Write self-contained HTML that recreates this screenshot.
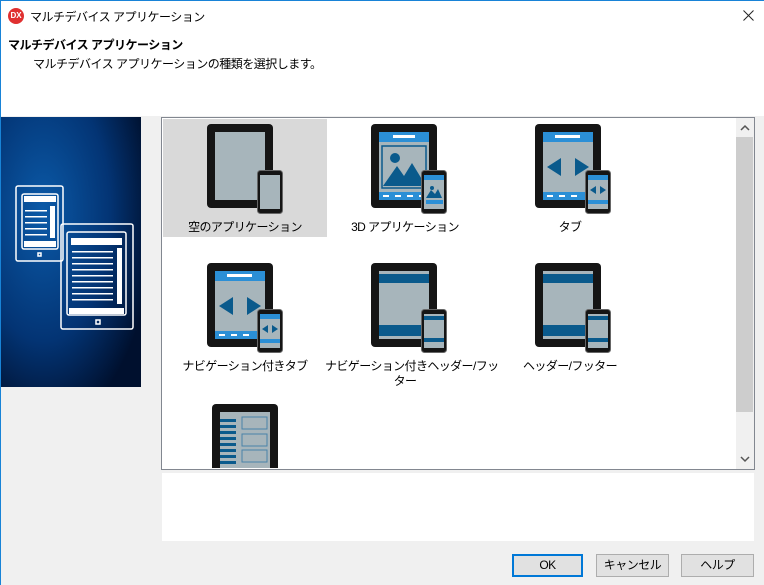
<!DOCTYPE html>
<html><head><meta charset="utf-8"><style>
*{margin:0;padding:0;box-sizing:border-box}
body{width:764px;height:585px;background:#f0f0f0;font-family:"Liberation Sans","Noto Sans CJK JP",sans-serif;font-size:12px;color:#000;position:relative;overflow:hidden}
.abs{position:absolute}
.lbl{position:absolute;text-align:center;font-size:12px;line-height:15px;letter-spacing:-0.6px;white-space:nowrap}
.btn{position:absolute;top:554px;height:23px;background:#e1e1e1;border:1px solid #adadad;text-align:center;line-height:21px;font-size:12px;letter-spacing:-0.5px}
</style></head><body>
<div class="abs" style="left:0;top:0;width:764px;height:116px;background:#fff"></div>
<div class="abs" style="left:0;top:0;width:1px;height:585px;background:#1883d7"></div>
<div class="abs" style="left:0;top:0;width:764px;height:1px;background:#1883d7"></div>
<div class="abs" style="left:8px;top:8px;width:16px;height:16px;border-radius:50%;background:#e03030;color:#fff;font-size:8px;font-weight:bold;line-height:16px;text-align:center">DX</div>
<div class="abs" style="left:30px;top:8px;font-size:12px;letter-spacing:-0.5px">マルチデバイス アプリケーション</div>
<svg class="abs" style="left:743px;top:10px" width="11" height="11"><path d="M0.5 0.5 L10.5 10.5 M10.5 0.5 L0.5 10.5" stroke="#222" stroke-width="1"/></svg>
<div class="abs" style="left:8px;top:36px;font-weight:bold;letter-spacing:-0.5px">マルチデバイス アプリケーション</div>
<div class="abs" style="left:33px;top:55px;letter-spacing:-0.5px">マルチデバイス アプリケーションの種類を選択します。</div>

<svg class="abs" style="left:1px;top:117px" width="140" height="270">
<defs><radialGradient id="g" cx="0.3" cy="0.35" r="0.8"><stop offset="0" stop-color="#0b5aa8"/><stop offset="0.6" stop-color="#033474"/><stop offset="1" stop-color="#00102e"/></radialGradient></defs>
<rect width="140" height="270" fill="url(#g)"/>
<g fill="none" stroke="#fff" stroke-width="1.5">
<rect x="15" y="69" width="47" height="75" rx="2"/><rect x="21" y="77" width="36" height="55" rx="2"/>
<rect x="60" y="107" width="72" height="105" rx="2"/><rect x="66" y="115" width="59" height="83" rx="2"/>
<rect x="37" y="136" width="3" height="3"/><rect x="95" y="203" width="4" height="4"/></g>
<g fill="#fff"><rect x="23" y="79" width="32" height="6"/><rect x="49" y="89" width="5" height="32"/>
<rect x="24" y="93" width="22" height="1.5"/><rect x="24" y="99" width="22" height="1.5"/><rect x="24" y="105" width="22" height="1.5"/><rect x="24" y="111" width="22" height="1.5"/><rect x="24" y="117" width="22" height="1.5"/>
<rect x="70" y="121" width="51" height="7"/><rect x="116" y="131" width="5" height="56"/>
<rect x="71" y="134" width="41" height="1.5"/><rect x="71" y="140" width="41" height="1.5"/><rect x="71" y="146" width="41" height="1.5"/><rect x="71" y="152" width="41" height="1.5"/><rect x="71" y="158" width="41" height="1.5"/><rect x="71" y="164" width="41" height="1.5"/><rect x="71" y="170" width="41" height="1.5"/><rect x="71" y="176" width="41" height="1.5"/><rect x="71" y="182" width="41" height="1.5"/>
<rect x="23" y="124" width="32" height="6"/><rect x="68" y="191" width="55" height="6"/></g>
</svg>

<div class="abs" style="left:161px;top:117px;width:594px;height:353px;background:#fff;border:1px solid #828790"></div>
<div class="abs" style="left:163px;top:119px;width:164px;height:118px;background:#d9d9d9"></div>
<div class="abs" style="left:736px;top:118px;width:18px;height:351px;background:#f0f0f0"></div>
<div class="abs" style="left:736px;top:137px;width:17px;height:275px;background:#cdcdcd"></div>
<svg class="abs" style="left:740px;top:124px" width="10" height="8"><path d="M1 6 L5 2 L9 6" fill="none" stroke="#555" stroke-width="1.5"/></svg>
<svg class="abs" style="left:740px;top:455px" width="10" height="8"><path d="M1 2 L5 6 L9 2" fill="none" stroke="#555" stroke-width="1.5"/></svg>

<svg width="0" height="0" style="position:absolute"><defs>
<symbol id="tab" viewBox="0 0 66 84"><rect width="66" height="84" rx="4" fill="#151515"/><rect x="8" y="8" width="50" height="68" fill="#a7b5bb"/></symbol>
<symbol id="ph" viewBox="0 0 26 44"><rect x="0.5" y="0.5" width="25" height="43" rx="3" fill="#151515" stroke="#666"/><rect x="3" y="5" width="20" height="34" fill="#a7b5bb"/></symbol>
</defs></svg>

<svg class="abs" style="left:207px;top:124px" width="80" height="92"><use href="#tab" width="66" height="84"/><use href="#ph" x="50" y="46" width="26" height="44"/></svg>
<svg class="abs" style="left:371px;top:124px" width="80" height="92"><use href="#tab" width="66" height="84"/>
<rect x="8" y="8" width="50" height="10" fill="#2b8fd6"/><rect x="22" y="11" width="22" height="3" fill="#fff"/>
<rect x="11" y="22" width="44" height="42" fill="none" stroke="#0a5a8c" stroke-width="1.5"/><circle cx="24" cy="34" r="5" fill="#0a5a8c"/><path d="M12 62 L26 42 L33 52 L41 39 L55 62Z" fill="#0a5a8c"/>
<rect x="8" y="68" width="50" height="8" fill="#2b8fd6"/><g fill="#fff"><rect x="12" y="71" width="6" height="2"/><rect x="24" y="71" width="6" height="2"/><rect x="36" y="71" width="6" height="2"/><rect x="48" y="71" width="6" height="2"/></g>
<use href="#ph" x="50" y="46" width="26" height="44"/><rect x="53" y="51" width="20" height="5" fill="#2b8fd6"/><rect x="55" y="76" width="17" height="4" fill="#2b8fd6"/><circle cx="61" cy="64" r="2" fill="#0a5a8c"/><path d="M55 74 L60 66 L64 70 L67 65 L71 74Z" fill="#0a5a8c"/></svg>
<svg class="abs" style="left:535px;top:124px" width="80" height="92"><use href="#tab" width="66" height="84"/>
<rect x="8" y="8" width="50" height="10" fill="#2b8fd6"/><rect x="20" y="11" width="25" height="3" fill="#fff"/>
<path d="M12 43 L26 34 L26 52Z M54 43 L40 34 L40 52Z" fill="#0a5a8c"/>
<rect x="8" y="68" width="50" height="8" fill="#2b8fd6"/><g fill="#fff"><rect x="12" y="71" width="6" height="2"/><rect x="24" y="71" width="6" height="2"/><rect x="36" y="71" width="6" height="2"/></g>
<use href="#ph" x="50" y="46" width="26" height="44"/><rect x="53" y="51" width="20" height="5" fill="#2b8fd6"/><path d="M55 66 L61 62 L61 70Z M71 66 L65 62 L65 70Z" fill="#0a5a8c"/><rect x="53" y="76" width="20" height="4" fill="#2b8fd6"/></svg>
<svg class="abs" style="left:207px;top:263px" width="80" height="92"><use href="#tab" width="66" height="84"/>
<rect x="8" y="8" width="50" height="10" fill="#2b8fd6"/><rect x="20" y="11" width="25" height="3" fill="#fff"/>
<path d="M12 43 L26 34 L26 52Z M54 43 L40 34 L40 52Z" fill="#0a5a8c"/>
<rect x="8" y="68" width="50" height="8" fill="#2b8fd6"/><g fill="#fff"><rect x="12" y="71" width="6" height="2"/><rect x="24" y="71" width="6" height="2"/><rect x="36" y="71" width="6" height="2"/></g>
<use href="#ph" x="50" y="46" width="26" height="44"/><rect x="53" y="51" width="20" height="5" fill="#2b8fd6"/><path d="M55 66 L61 62 L61 70Z M71 66 L65 62 L65 70Z" fill="#0a5a8c"/><rect x="53" y="76" width="20" height="4" fill="#2b8fd6"/></svg>
<svg class="abs" style="left:371px;top:263px" width="80" height="92"><use href="#tab" width="66" height="84"/>
<rect x="8" y="11" width="50" height="9" fill="#0a5a8c"/><rect x="8" y="62" width="50" height="11" fill="#0a5a8c"/>
<use href="#ph" x="50" y="46" width="26" height="44"/><rect x="53" y="53" width="20" height="4" fill="#0a5a8c"/><rect x="53" y="75" width="20" height="4" fill="#0a5a8c"/></svg>
<svg class="abs" style="left:535px;top:263px" width="80" height="92"><use href="#tab" width="66" height="84"/>
<rect x="8" y="11" width="50" height="9" fill="#0a5a8c"/><rect x="8" y="62" width="50" height="11" fill="#0a5a8c"/>
<use href="#ph" x="50" y="46" width="26" height="44"/><rect x="53" y="53" width="20" height="4" fill="#0a5a8c"/><rect x="53" y="75" width="20" height="4" fill="#0a5a8c"/></svg>
<svg class="abs" style="left:212px;top:404px" width="66" height="64"><use href="#tab" width="66" height="84"/>
<g fill="#0a5a8c"><rect x="8" y="15" width="16" height="3"/><rect x="8" y="21" width="16" height="3"/><rect x="8" y="27" width="16" height="3"/><rect x="8" y="33" width="16" height="3"/><rect x="8" y="39" width="16" height="3"/><rect x="8" y="45" width="16" height="3"/><rect x="8" y="51" width="16" height="3"/><rect x="8" y="57" width="16" height="3"/></g>
<g fill="none" stroke="#4a82a8"><rect x="30" y="13" width="25" height="12"/><rect x="30" y="30" width="25" height="12"/><rect x="30" y="46" width="25" height="12"/></g></svg>

<div class="lbl" style="left:163px;top:220px;width:164px">空のアプリケーション</div>
<div class="lbl" style="left:330px;top:220px;width:150px">3D アプリケーション</div>
<div class="lbl" style="left:500px;top:220px;width:140px">タブ</div>
<div class="lbl" style="left:170px;top:359px;width:150px">ナビゲーション付きタブ</div>
<div class="lbl" style="left:325px;top:359px;width:160px">ナビゲーション付きヘッダー/フッ<br>ター</div>
<div class="lbl" style="left:500px;top:359px;width:140px">ヘッダー/フッター</div>

<div class="abs" style="left:162px;top:473px;width:592px;height:68px;background:#fff"></div>
<div class="btn" style="left:512px;width:71px;border:2px solid #0078d7;line-height:19px">OK</div>
<div class="btn" style="left:596px;width:73px">キャンセル</div>
<div class="btn" style="left:681px;width:73px">ヘルプ</div>
</body></html>
